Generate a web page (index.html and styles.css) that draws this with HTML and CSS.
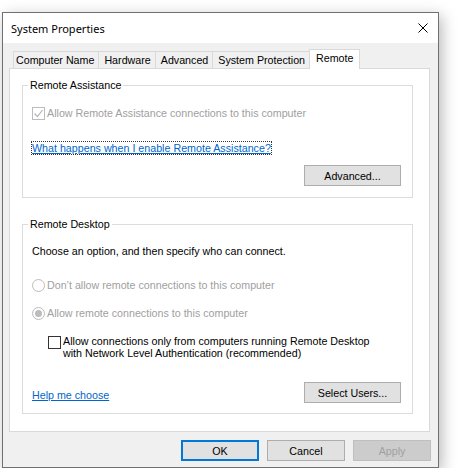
FILE: index.html
```html
<!DOCTYPE html>
<html lang="en">
<head>
    <meta charset="UTF-8">
    <title>System Properties</title>
    <link rel="stylesheet" href="styles.css">
</head>
<body>
    <div class="window">
        <div class="titlebar">
            <span class="title">System Properties</span>
            <svg class="close" width="10" height="10" viewBox="0 0 10 10">
                <path d="M0.5 0.5 L9.5 9.5 M9.5 0.5 L0.5 9.5" stroke="#000" stroke-width="1" fill="none"/>
            </svg>
        </div>

        <div class="content">
            <div class="tabs">
                <div class="tab">Computer Name</div>
                <div class="tab">Hardware</div>
                <div class="tab">Advanced</div>
                <div class="tab">System Protection</div>
                <div class="tab active">Remote</div>
            </div>

            <div class="panel">
                <fieldset class="group">
                    <legend>Remote Assistance</legend>
                    <label class="option disabled first">
                        <span class="check checked">
                            <svg width="11" height="11" viewBox="0 0 11 11">
                                <path d="M1.5 5.5 L4.5 8.5 L9.5 2" stroke="#b5b5b5" stroke-width="1.2" fill="none"/>
                            </svg>
                        </span>
                        Allow Remote Assistance connections to this computer
                    </label>
                    <a class="link focused" href="#">What happens when I enable Remote Assistance?</a>
                    <div class="actions">
                        <button class="btn wide">Advanced...</button>
                    </div>
                </fieldset>

                <fieldset class="group desktop">
                    <legend>Remote Desktop</legend>
                    <p class="intro">Choose an option, and then specify who can connect.</p>
                    <label class="option disabled radio-row">
                        <span class="radio"></span>
                        Don’t allow remote connections to this computer
                    </label>
                    <label class="option disabled radio-row second">
                        <span class="radio selected"></span>
                        Allow remote connections to this computer
                    </label>
                    <label class="option nla">
                        <span class="check"></span>
                        <span>Allow connections only from computers running Remote Desktop<br>with Network Level Authentication (recommended)</span>
                    </label>
                    <div class="actions split">
                        <a class="link help" href="#">Help me choose</a>
                        <button class="btn wide">Select Users...</button>
                    </div>
                </fieldset>
            </div>

            <div class="dialog-buttons">
                <button class="btn default">OK</button>
                <button class="btn">Cancel</button>
                <button class="btn" disabled>Apply</button>
            </div>
        </div>
    </div>
</body>
</html>
```

FILE: styles.css
```css
body {
    margin: 0;
    background: #fff;
    font-family: "Liberation Sans", Arial, sans-serif;
    font-size: 10.7px;
    color: #000;
}
.window {
    margin: 12px 0 0 2px;
    width: 435px;
    border: 1px solid #707070;
    background: #f0f0f0;
    box-shadow: 3px 4px 14px rgba(0,0,0,0.28);
}
.titlebar {
    height: 30px;
    background: #fff;
    display: flex;
    align-items: center;
    justify-content: space-between;
    padding: 0 10px 0 8px;
    font-family: "Noto Sans", "Segoe UI", sans-serif;
    font-size: 11px;
}
.close {
    display: block;
}
.content {
    padding: 6px 8px 6px 6px;
}
.tabs {
    display: flex;
    align-items: flex-end;
    height: 20px;
    margin-bottom: -1px;
    padding-left: 4px;
    position: relative;
    z-index: 1;
}
.tab {
    height: 16px;
    line-height: 16px;
    padding: 0 4px 0 5px;
    border: 1px solid #d9d9d9;
    border-bottom: none;
    margin-bottom: 1px;
    background: #f0f0f0;
}
.tab:first-child {
    padding-left: 2px;
}
.tab + .tab {
    margin-left: -1px;
}
.tab.active {
    height: 19px;
    line-height: 17px;
    margin-bottom: 0;
    background: #fff;
    padding: 0 6px;
}
.panel {
    background: #fff;
    border: 1px solid #d9d9d9;
    padding: 10px 16px 17px 12px;
}
.group {
    margin: 0;
    min-width: 0;
    border: 1px solid #dcdcdc;
    padding: 0 11px 11px 9px;
}
.group legend {
    padding: 0 2px;
    margin-left: -4px;
    line-height: 13px;
}
.group.desktop {
    margin-top: 20px;
    padding-bottom: 10px;
}
.option {
    display: flex;
    align-items: center;
    gap: 2px;
    height: 13px;
    line-height: 13px;
}
.option.first {
    margin-top: 15px;
}
.disabled {
    color: #a0a0a0;
}
.check {
    width: 11px;
    height: 11px;
    border: 1px solid #333;
    background: #fff;
    display: flex;
    flex-shrink: 0;
}
.check.checked {
    border-color: #bcbcbc;
}
.radio {
    width: 11px;
    height: 11px;
    border: 1px solid #bcbcbc;
    border-radius: 50%;
    background: #fff;
    display: flex;
    align-items: center;
    justify-content: center;
    flex-shrink: 0;
}
.radio.selected::after {
    content: "";
    width: 7px;
    height: 7px;
    border-radius: 50%;
    background: #bcbcbc;
}
.link {
    display: inline-block;
    color: #0066cc;
    text-decoration: underline;
    line-height: 12px;
}
.link.focused {
    margin-top: 22px;
    outline: 1px dotted #333;
}
.actions {
    display: flex;
    justify-content: flex-end;
    margin-top: 11px;
}
.actions.split {
    justify-content: space-between;
    align-items: center;
    margin-top: 23px;
}
.link.help {
    padding-top: 5px;
}
.intro {
    margin: 14px 0 0;
    line-height: 13px;
}
.radio-row {
    margin-top: 21px;
}
.radio-row.second {
    margin-top: 15px;
}
.option.nla {
    height: auto;
    line-height: 12px;
    align-items: flex-start;
    margin-top: 15px;
    padding-left: 16px;
}
.option.nla .check {
    margin-top: 1px;
}
.btn {
    font-family: "Liberation Sans", Arial, sans-serif;
    font-size: 10.7px;
    color: #000;
    background: #e1e1e1;
    border: 1px solid #adadad;
    height: 21px;
    width: 78px;
    padding: 0;
    margin: 0;
}
.btn.wide {
    width: 97px;
}
.btn.default {
    border: 2px solid #0078d7;
}
.btn:disabled {
    background: #cccccc;
    border-color: #bfbfbf;
    color: #a0a0a0;
}
.dialog-buttons {
    display: flex;
    justify-content: flex-end;
    gap: 8px;
    margin: 8px -1px 0 0;
}
```
